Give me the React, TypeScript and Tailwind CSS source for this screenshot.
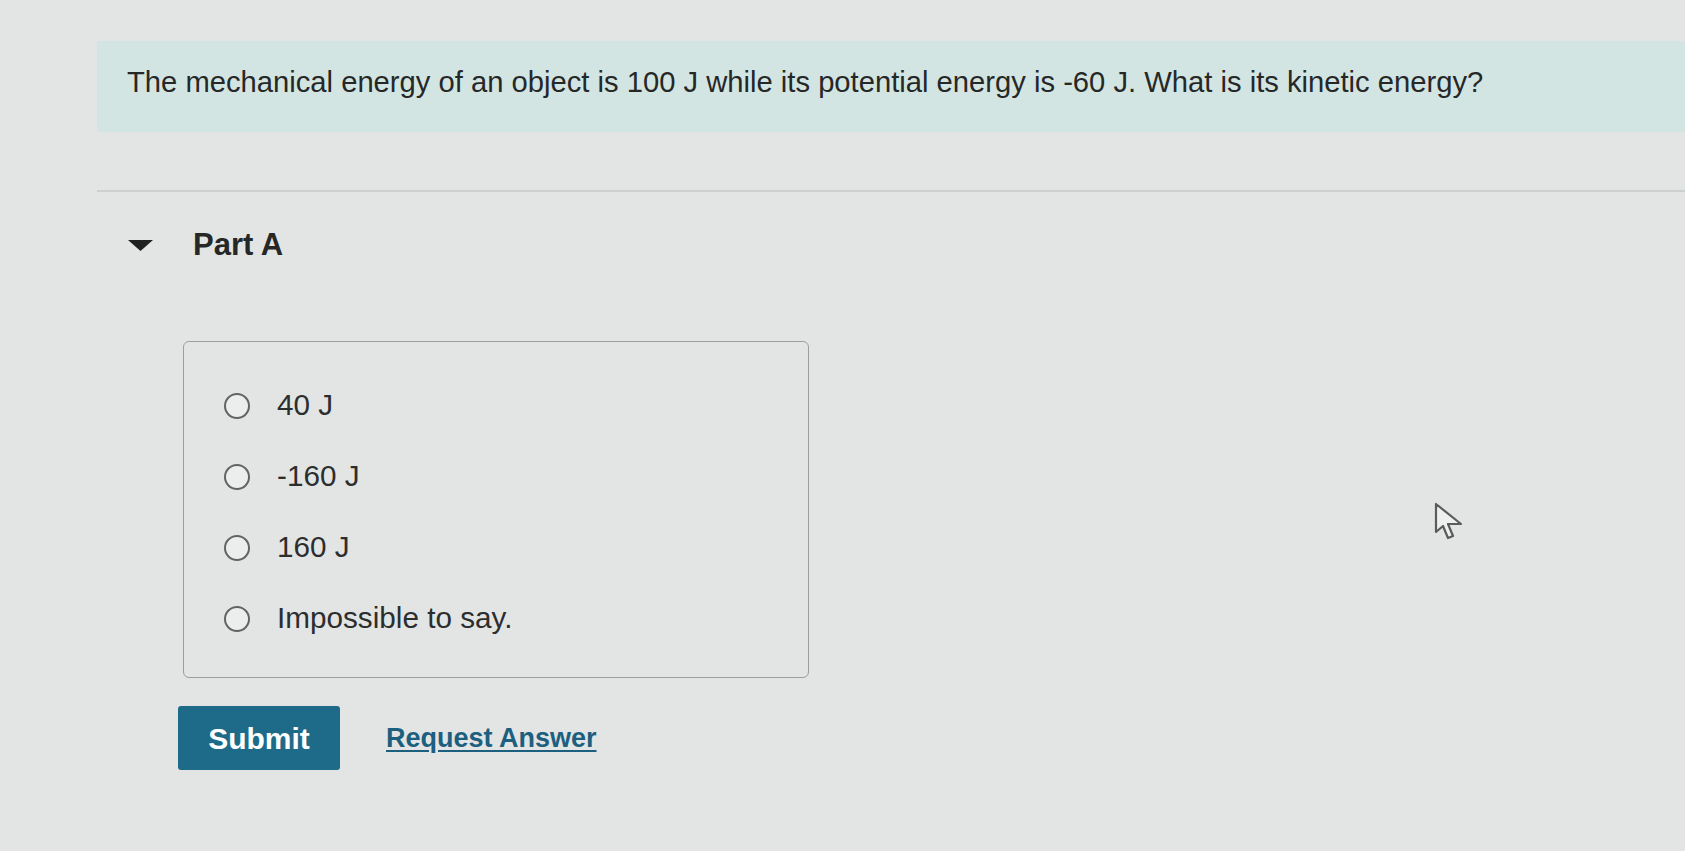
import React from "react"

const options = ["40 J", "-160 J", "160 J", "Impossible to say."]

function Radio() {
  return <span className="block w-[26px] h-[26px] rounded-full border-2 border-[#626464] bg-[#eceeee] shrink-0" />
}

export default function App() {
  return (
    <main className="relative min-h-screen w-full overflow-hidden bg-[#e3e5e5] font-['Liberation_Sans',Arial,sans-serif] text-[#262828]">
      <div className="pt-[41px] pl-[97px]">
        {/* question band */}
        <div className="h-[91px] bg-[#d3e5e2] flex items-center pl-[30px] pb-[8px] text-[29.2px]">
          The mechanical energy of an object is 100 J while its potential energy is -60 J. What is its kinetic energy?
        </div>

        <div className="mt-[58px] border-t-2 border-[#cdd0d0]">
          <div className="flex items-center pl-[30px] pt-[33px] h-[73px]">
            <svg width="27" height="13" viewBox="0 0 27 13" className="shrink-0">
              <path d="M1 1 L26 1 L13.5 12 Z" fill="#1f2121" />
            </svg>
            <span className="ml-[39px] text-[31px] font-bold">Part A</span>
          </div>

          <div className="ml-[86px] mt-[76px] w-[626px] h-[337px] border border-[#9c9e9e] rounded-md pl-[40px] pt-[28px]">
            {options.map((o) => (
              <label key={o} className="flex items-center h-[71px] gap-[27px]">
                <Radio />
                <span className="text-[29.7px] text-[#2c2e2e]">{o}</span>
              </label>
            ))}
          </div>

          <div className="flex items-center ml-[81px] mt-[28px]">
            <button className="w-[162px] h-[64px] rounded-[3px] bg-[#1e6b89] text-white text-[30px] font-bold">
              Submit
            </button>
            <a className="ml-[46px] text-[27px] font-bold text-[#1d5f7f] underline underline-offset-[3px]">
              Request Answer
            </a>
          </div>
        </div>
      </div>

      {/* mouse pointer */}
      <svg width="34" height="40" viewBox="0 0 34 40" className="absolute left-[1434px] top-[502px]">
        <path
          d="M2 2 L2 30 L9 24 L14 36 L19 34 L14 22 L27 22 Z"
          fill="#eef0f0"
          stroke="#5a5c5c"
          strokeWidth="2.2"
          strokeLinejoin="round"
        />
      </svg>
    </main>
  )
}
